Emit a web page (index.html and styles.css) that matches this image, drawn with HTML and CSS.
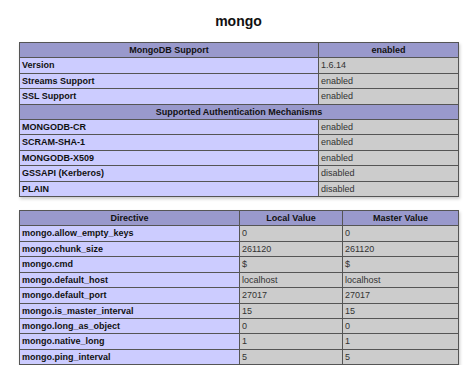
FILE: index.html
```html
<!DOCTYPE html>
<html>
<head>
<meta charset="utf-8">
<link rel="stylesheet" href="styles.css">
</head>
<body>
<div class="page">
  <h2 class="title">mongo</h2>
  <table class="info t1">
    <colgroup><col class="c-key1"><col class="c-val1"></colgroup>
    <tr class="h"><th>MongoDB Support</th><th>enabled</th></tr>
    <tr><td class="e">Version</td><td class="v">1.6.14</td></tr>
    <tr><td class="e">Streams Support</td><td class="v">enabled</td></tr>
    <tr><td class="e">SSL Support</td><td class="v">enabled</td></tr>
    <tr class="h"><th colspan="2">Supported Authentication Mechanisms</th></tr>
    <tr><td class="e">MONGODB-CR</td><td class="v">enabled</td></tr>
    <tr><td class="e">SCRAM-SHA-1</td><td class="v">enabled</td></tr>
    <tr><td class="e">MONGODB-X509</td><td class="v">enabled</td></tr>
    <tr><td class="e">GSSAPI (Kerberos)</td><td class="v">disabled</td></tr>
    <tr><td class="e">PLAIN</td><td class="v">disabled</td></tr>
  </table>
  <table class="info t2">
    <colgroup><col class="c-dir"><col class="c-loc"><col class="c-mas"></colgroup>
    <tr class="h"><th>Directive</th><th>Local Value</th><th>Master Value</th></tr>
    <tr><td class="e">mongo.allow_empty_keys</td><td class="v">0</td><td class="v">0</td></tr>
    <tr><td class="e">mongo.chunk_size</td><td class="v">261120</td><td class="v">261120</td></tr>
    <tr><td class="e">mongo.cmd</td><td class="v">$</td><td class="v">$</td></tr>
    <tr><td class="e">mongo.default_host</td><td class="v">localhost</td><td class="v">localhost</td></tr>
    <tr><td class="e">mongo.default_port</td><td class="v">27017</td><td class="v">27017</td></tr>
    <tr><td class="e">mongo.is_master_interval</td><td class="v">15</td><td class="v">15</td></tr>
    <tr><td class="e">mongo.long_as_object</td><td class="v">0</td><td class="v">0</td></tr>
    <tr><td class="e">mongo.native_long</td><td class="v">1</td><td class="v">1</td></tr>
    <tr><td class="e">mongo.ping_interval</td><td class="v">5</td><td class="v">5</td></tr>
  </table>
</div>
</body>
</html>
```

FILE: styles.css
```css
html, body {
  margin: 0;
  padding: 0;
  background: #ffffff;
}

body {
  font-family: "Liberation Sans", Arial, sans-serif;
  color: #111;
}

.page {
  width: 439px;
  margin-left: 19px;
  padding-top: 13px;
  display: flex;
  flex-direction: column;
}

.title {
  margin: 0 0 13px 0;
  font-size: 14px;
  line-height: 16px;
  font-weight: bold;
  text-align: center;
  color: #111;
}

.info {
  border-collapse: collapse;
  width: 439px;
  table-layout: fixed;
  box-shadow: 1px 2px 3px #ccc;
}

.t1 {
  margin-bottom: 13px;
}

.c-key1 { width: 299px; }
.c-val1 { width: 140px; }
.c-dir { width: 220px; }
.c-loc { width: 103px; }
.c-mas { width: 116px; }

.info th,
.info td {
  border: 1px solid #555;
  font-size: 9px;
  line-height: 10.4px;
  padding: 2px 2px;
  height: 10.4px;
  white-space: nowrap;
  overflow: hidden;
}

.info th {
  background: #9999cc;
  font-weight: bold;
  text-align: center;
  color: #111;
}

.info .e {
  background: #ccccff;
  font-weight: bold;
  color: #111;
}

.info .v {
  background: #cccccc;
  color: #333;
}
```
